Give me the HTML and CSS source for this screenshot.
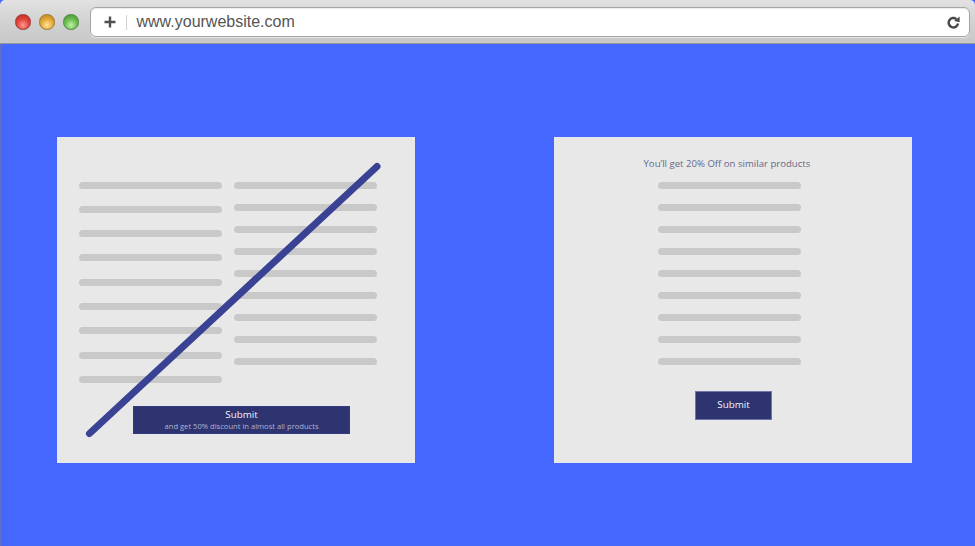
FILE: index.html
```html
<!DOCTYPE html>
<html>
<head>
<meta charset="utf-8">
<link rel="stylesheet" href="styles.css">
</head>
<body>
<div class="window">
  <header class="toolbar">
    <div class="lights">
      <span class="light red"></span>
      <span class="light yellow"></span>
      <span class="light green"></span>
    </div>
    <div class="address">
      <svg class="plus" width="12" height="12" viewBox="0 0 12 12"><path d="M6 0.5V11.5M0.5 6H11.5" stroke="#505050" stroke-width="2.4" fill="none"/></svg>
      <span class="sep"></span>
      <span class="url">www.yourwebsite.com</span>
      <svg class="reload" width="13" height="14" viewBox="0 0 13 14"><path d="M11 8.6A4.7 4.7 0 1 1 9.4 4.1" stroke="#4a4a4a" stroke-width="2.5" fill="none" stroke-linecap="butt"/><path d="M12.6 1.6L12.6 7.2L7.2 6.0Z" fill="#4a4a4a"/></svg>
    </div>
  </header>
  <main class="viewport">
    <section class="card card-left">
      <div class="columns">
        <div class="col col-a">
          <span class="line"></span><span class="line"></span><span class="line"></span>
          <span class="line"></span><span class="line"></span><span class="line"></span>
          <span class="line"></span><span class="line"></span><span class="line"></span>
        </div>
        <div class="col col-b">
          <span class="line"></span><span class="line"></span><span class="line"></span>
          <span class="line"></span><span class="line"></span><span class="line"></span>
          <span class="line"></span><span class="line"></span><span class="line"></span>
        </div>
      </div>
      <button class="btn btn-wide">
        <span class="btn-title">Submit</span>
        <span class="btn-sub">and get 50% discount in almost all products</span>
      </button>
      <svg class="strike" width="358" height="326" viewBox="0 0 358 326"><line x1="32.5" y1="296.5" x2="320" y2="29.5" stroke="#3a4294" stroke-width="7" stroke-linecap="round"/></svg>
    </section>
    <section class="card card-right">
      <p class="offer">You’ll get 20% Off on similar products</p>
      <div class="col col-c">
        <span class="line"></span><span class="line"></span><span class="line"></span>
        <span class="line"></span><span class="line"></span><span class="line"></span>
        <span class="line"></span><span class="line"></span><span class="line"></span>
      </div>
      <button class="btn btn-small"><span class="btn-title">Submit</span></button>
    </section>
  </main>
</div>
</body>
</html>
```

FILE: styles.css
```css
html, body {
  margin: 0;
  padding: 0;
}

body {
  font-family: "Open Sans", "Liberation Sans", sans-serif;
  background: #4567fe;
}

.window {
  width: 975px;
  height: 546px;
  display: flex;
  flex-direction: column;
  overflow: hidden;
}

.toolbar {
  height: 44px;
  box-sizing: border-box;
  padding: 1px 0 0 15px;
  border-bottom: 1px solid #979797;
  background: linear-gradient(#e2e2e2, #cfcfcf 60%, #c9c9c9);
  border-radius: 5px 5px 0 0;
  display: flex;
  align-items: center;
  flex-shrink: 0;
}

.lights {
  display: flex;
  gap: 8.5px;
}

.light {
  width: 15.5px;
  height: 15.5px;
  border-radius: 50%;
  box-sizing: border-box;
  display: block;
}

.red {
  background: radial-gradient(circle at 50% 72%, #ff9a92 0%, #e3453e 48%, #b8231e 100%);
  border: 1px solid #9a3a36;
}

.yellow {
  background: radial-gradient(circle at 50% 72%, #ffe59a 0%, #e3a93a 48%, #b97f19 100%);
  border: 1px solid #9d7a2f;
}

.green {
  background: radial-gradient(circle at 50% 72%, #c4f2a8 0%, #6cbf52 48%, #3f8f2c 100%);
  border: 1px solid #4e8a3e;
}

.address {
  margin-left: 11.5px;
  width: 880px;
  height: 30px;
  box-sizing: border-box;
  border: 1px solid #a4a4a4;
  border-radius: 6px;
  background: #fff;
  box-shadow: inset 0 1px 1px rgba(0, 0, 0, 0.08), 0 1px 0 rgba(255, 255, 255, 0.5);
  display: flex;
  align-items: center;
  padding-left: 12.5px;
  padding-right: 9px;
}

.plus {
  display: block;
  flex-shrink: 0;
}

.sep {
  width: 1px;
  height: 15px;
  background: #d2d2d2;
  margin-left: 10px;
}

.url {
  margin-left: 10px;
  font-family: "Liberation Sans", Arial, sans-serif;
  font-size: 16px;
  color: #555;
  line-height: 20px;
}

.reload {
  margin-left: auto;
  display: block;
}

.viewport {
  flex: 1;
  background: #4567fe;
  box-shadow: inset 2px 0 2px -1px rgba(120, 120, 140, 0.7);
  display: flex;
  align-items: flex-start;
  padding: 92.5px 0 0 57px;
  gap: 139px;
}

.card {
  width: 358px;
  height: 326px;
  box-sizing: border-box;
  background: #e8e8e8;
  position: relative;
  flex-shrink: 0;
}

.card-left {
  padding: 45px 0 0 21.5px;
}

.columns {
  display: flex;
  gap: 12.5px;
  align-items: flex-start;
}

.col {
  width: 143px;
  display: flex;
  flex-direction: column;
}

.col-a {
  gap: 17.3px;
}

.col-b {
  gap: 15.1px;
}

.line {
  display: block;
  height: 7px;
  border-radius: 3.5px;
  background: #c9c9c9;
}

.btn {
  font-family: "Open Sans", "Liberation Sans", sans-serif;
  background: #2e3470;
  border: 1px solid #4a5090;
  padding: 0;
  margin: 0;
  box-sizing: border-box;
  display: flex;
  flex-direction: column;
  align-items: center;
  justify-content: center;
  color: #fff;
}

.btn-wide {
  width: 216.5px;
  height: 28.5px;
  margin: 23px 0 0 54.8px;
  border-color: #33397a;
}

.btn-title {
  font-size: 9.8px;
  line-height: 12px;
  color: #f4f5fa;
}

.btn-sub {
  font-size: 7.6px;
  line-height: 10px;
  color: #aeb3d8;
}

.strike {
  position: absolute;
  left: 0;
  top: 0;
  pointer-events: none;
}

.card-right {
  padding: 20px 0 0 0;
}

.offer {
  margin: 0 0 0 89.5px;
  font-size: 9.6px;
  line-height: 13px;
  color: #66688a;
  white-space: nowrap;
}

.col-c {
  margin: 12px 0 0 103.7px;
  gap: 15.1px;
}

.btn-small {
  width: 76.4px;
  height: 28.5px;
  margin: 25.8px 0 0 141.3px;
  border-color: #6f74a8;
}
```
